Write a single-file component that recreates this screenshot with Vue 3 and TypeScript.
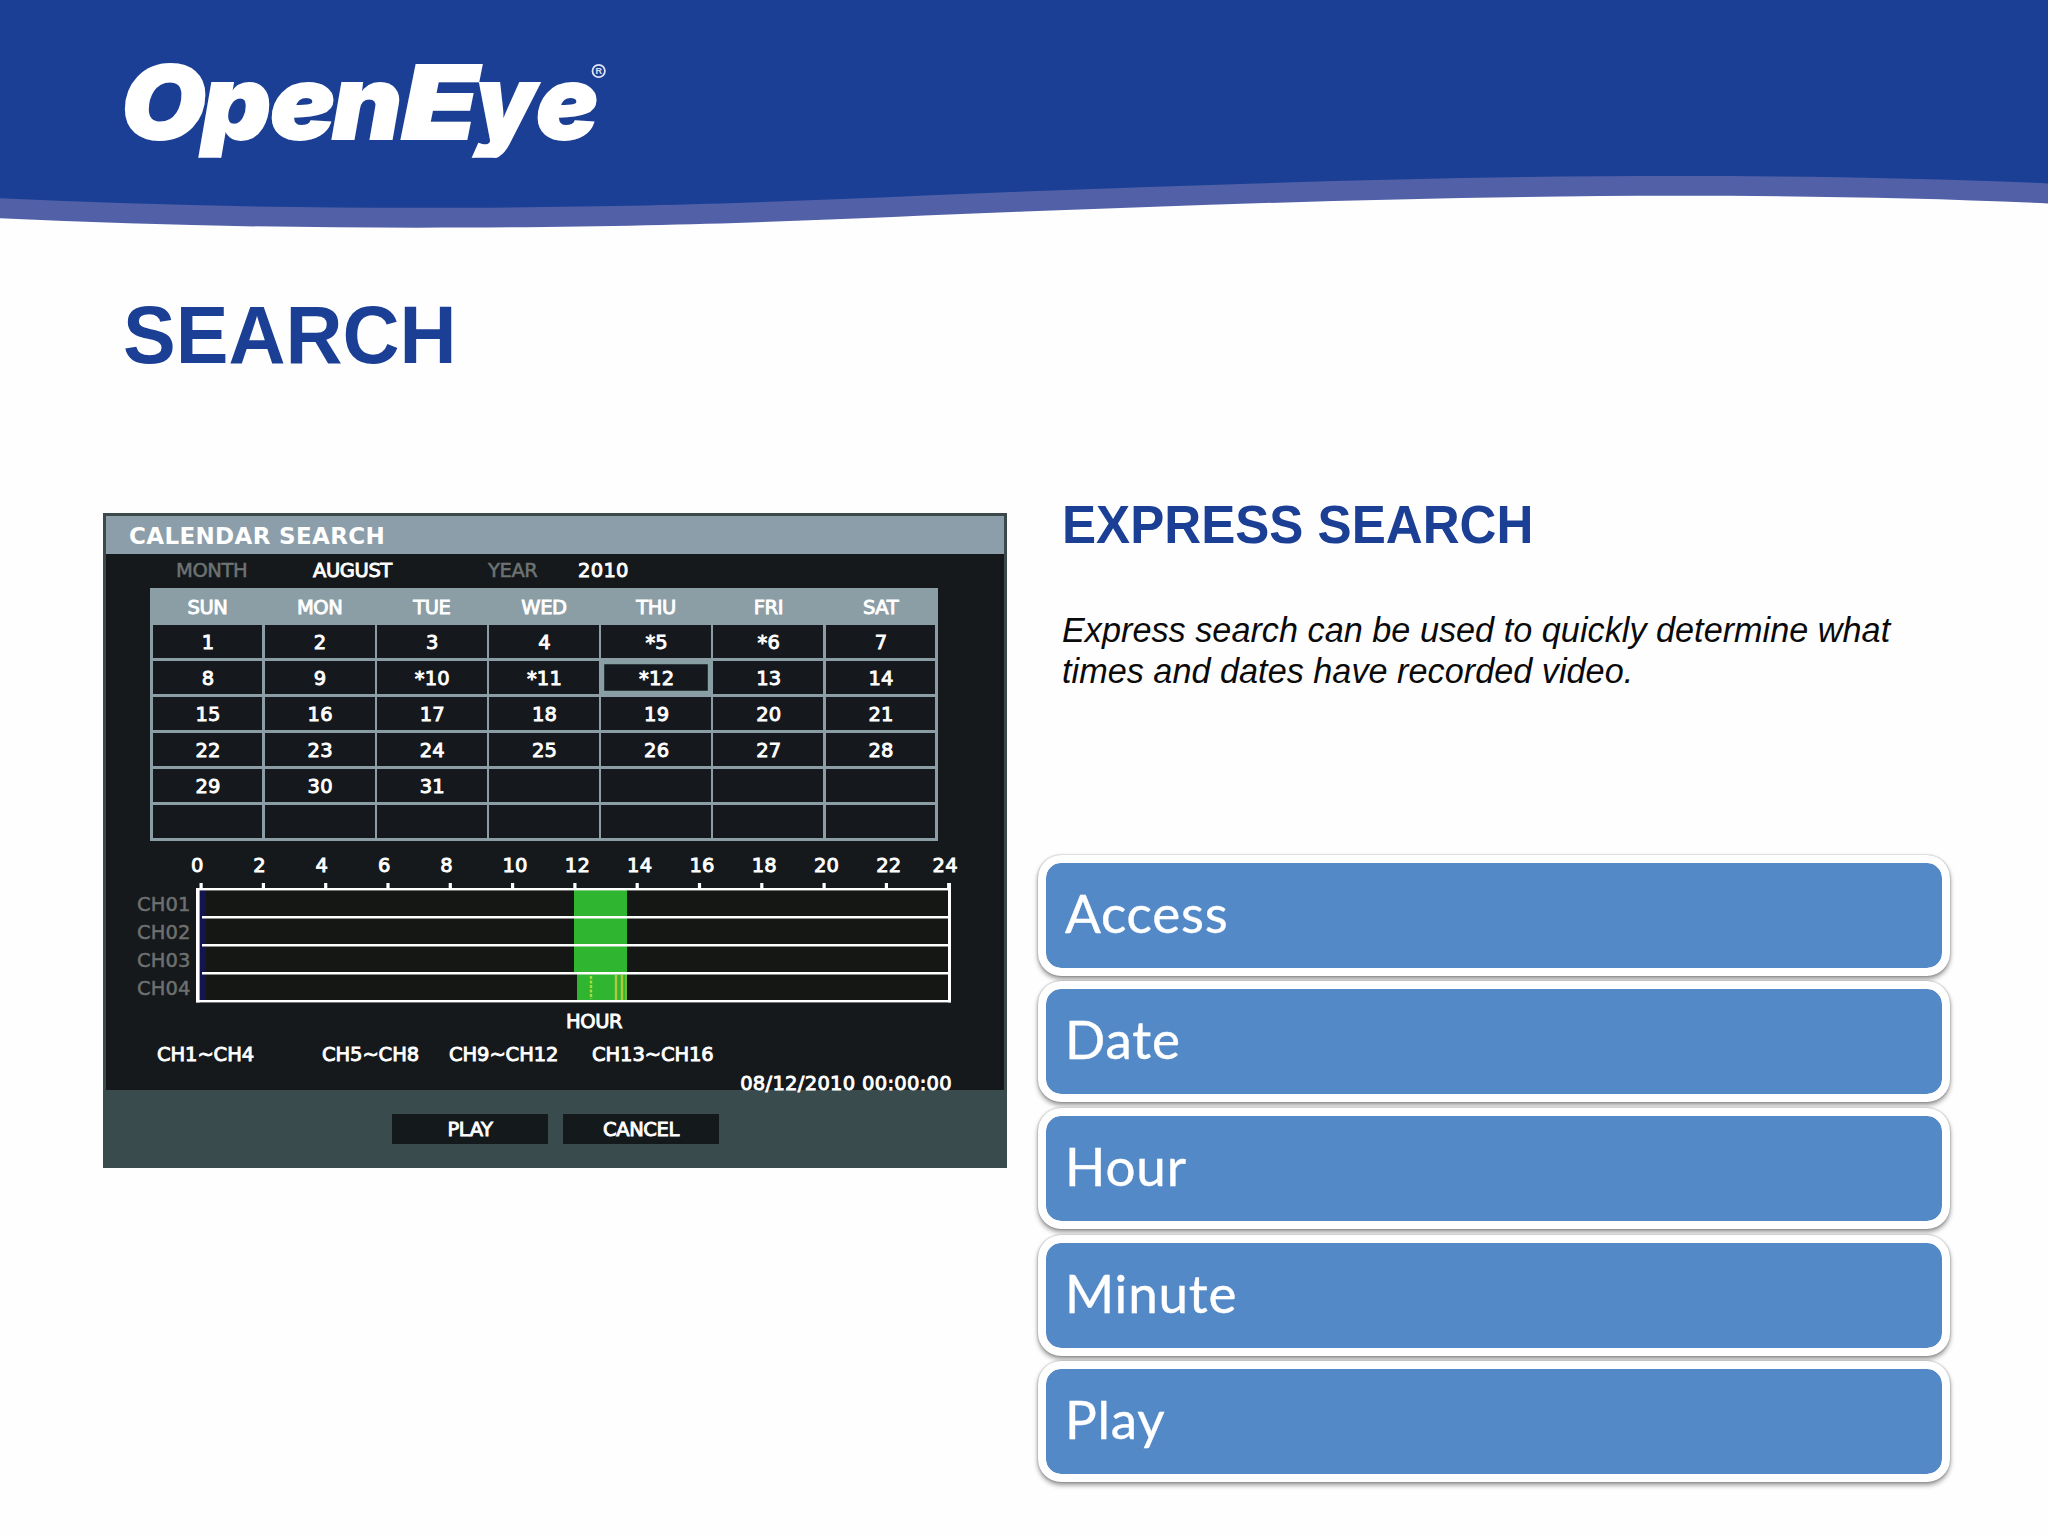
<script setup lang="ts">
interface Glyph {
  char: string
  x: number
  width: number
}

const logo: Glyph[] = [
  { char: 'O', x: 121, width: 85 },
  { char: 'p', x: 202, width: 69 },
  { char: 'e', x: 270, width: 65 },
  { char: 'n', x: 332, width: 70 },
  { char: 'E', x: 401.5, width: 77 },
  { char: 'y', x: 475, width: 61 },
  { char: 'e', x: 536, width: 62 },
]

const weekdays: string[] = ['SUN', 'MON', 'TUE', 'WED', 'THU', 'FRI', 'SAT']
const recorded = new Set<number>([5, 6, 10, 11, 12])
const selectedDay = 12
const days: number[] = Array.from({ length: 42 }, (_, i) => i + 1)

const hours: number[] = Array.from({ length: 13 }, (_, i) => i * 2)
const channels: string[] = ['CH01', 'CH02', 'CH03', 'CH04']
const groups: string[] = ['CH1~CH4', 'CH5~CH8', 'CH9~CH12', 'CH13~CH16']
const steps: string[] = ['Access', 'Date', 'Hour', 'Minute', 'Play']

function label(day: number): string {
  if (day > 31) return ''
  return recorded.has(day) ? `*${day}` : String(day)
}
</script>

<template>
  <div class="slide">
    <header class="banner">
      <svg viewBox="0 0 2048 240" width="2048" height="240">
        <path
          fill="#5260a8"
          d="M0 0V218.3C140 225 280 227.7 418 227.7C700 227.7 850 218 1024 211.5C1240 203.5 1450 195.8 1677 195.8C1800 195.8 1930 198 2048 203.5V0Z"
        />
        <path
          fill="#1b3f94"
          d="M0 0V198.3C140 205 280 207.8 418 207.8C700 207.8 850 198 1024 191.5C1240 183.5 1450 176 1677 176C1800 176 1930 178 2048 183.5V0Z"
        />
        <svg x="0" y="0" width="700" height="157.7" viewBox="0 0 700 157.7">
          <text class="logo" y="139.3">
            <tspan
              v-for="(g, i) in logo"
              :key="i"
              :x="g.x"
              :textLength="g.width"
              lengthAdjust="spacingAndGlyphs"
            >{{ g.char }}</tspan>
          </text>
        </svg>
        <circle cx="598.7" cy="71" r="6.2" fill="none" stroke="#dfe4f2" stroke-width="1.8" />
        <text class="reg" x="598.7" y="74.4" text-anchor="middle">R</text>
      </svg>
    </header>

    <h1>SEARCH</h1>

    <main>
      <section class="dvr">
        <div class="title">CALENDAR SEARCH</div>
        <div class="period">
          <span class="dim month">MONTH</span>
          <span class="august">AUGUST</span>
          <span class="dim year">YEAR</span>
          <span class="num">2010</span>
        </div>
        <div class="calendar">
          <div v-for="d in weekdays" :key="d" class="weekday">{{ d }}</div>
          <div v-for="d in days" :key="d" class="day" :class="{ selected: d === selectedDay }">{{ label(d) }}</div>
        </div>
        <div class="hours">
          <span v-for="h in hours" :key="h">{{ h }}</span>
        </div>
        <div class="timeline">
          <div class="channels">
            <span v-for="c in channels" :key="c">{{ c }}</span>
          </div>
          <svg viewBox="0 0 755 120" width="755" height="120">
            <rect x="1" y="6" width="753" height="112" fill="#151715" />
            <rect x="3" y="7" width="7" height="110" fill="#14144f" />
            <rect x="378" y="7" width="53" height="84" fill="#2fb530" />
            <rect x="381" y="91" width="50" height="26" fill="#2fb530" />
            <path d="M395 93V116" stroke="#a5dc3c" stroke-width="2.4" stroke-dasharray="3 1.5" />
            <path d="M420 92V117M426 92V117" stroke="#b4c83c" stroke-width="2.4" />
            <path d="M430 92V117" stroke="#7cb832" stroke-width="2" />
            <g fill="#fff">
              <rect
                v-for="(h, i) in hours"
                :key="h"
                :x="3.5 + i * 62.3"
                y="0"
                width="3.2"
                height="6"
              />
              <rect x="0" y="5" width="755" height="2.4" />
              <rect v-for="n in 3" :key="n" x="6" :y="5 + n * 28" width="748" height="2.5" />
              <rect x="0" y="117" width="755" height="2.4" />
              <rect x="0" y="5" width="3.6" height="114.4" />
              <rect x="752" y="0" width="3" height="119.4" />
            </g>
          </svg>
        </div>
        <div class="unit">HOUR</div>
        <div class="groups">
          <span v-for="g in groups" :key="g">{{ g }}</span>
        </div>
        <div class="stamp">08/12/2010 00:00:00</div>
        <div class="actions">
          <button type="button">PLAY</button>
          <button type="button">CANCEL</button>
        </div>
      </section>

      <section class="info">
        <h2>EXPRESS SEARCH</h2>
        <p>Express search can be used to quickly determine what<br />times and dates have recorded video.</p>
        <ul>
          <li v-for="s in steps" :key="s">{{ s }}</li>
        </ul>
      </section>
    </main>
  </div>
</template>

<style>
body {
  margin: 0;
  background: #fefefe;
}
</style>

<style scoped>
.slide {
  width: 2048px;
  height: 1536px;
  overflow: hidden;
  background: #fefefe;
  font-family: "Liberation Sans", Arial, sans-serif;
}
.banner {
  height: 240px;
}
.banner svg {
  display: block;
}
.logo {
  font: italic 900 102px Inter, sans-serif;
  fill: #fff;
  stroke: #fff;
  stroke-width: 1.8px;
}
.reg {
  font: bold 9px "Liberation Sans", sans-serif;
  fill: #dfe4f2;
}
h1 {
  margin: 51px 0 0 123px;
  font-size: 79px;
  line-height: 90px;
  color: #1b3f94;
  transform: scaleY(1.04);
  transform-origin: 0 80%;
}
main {
  display: flex;
  margin-top: 132px;
}
.dvr {
  box-sizing: border-box;
  width: 904px;
  height: 655px;
  margin-left: 103px;
  flex: none;
  border: 3px solid #3c494b;
  border-bottom: 0;
  background: #15191c;
  color: #fff;
  font: 19.5px/24px "DejaVu Sans", sans-serif;
  letter-spacing: -0.4px;
  -webkit-text-stroke: 0.9px currentColor;
  white-space: nowrap;
}
.title {
  height: 38px;
  padding-left: 23px;
  background: #8c9eaa;
  font-size: 23px;
  font-weight: bold;
  line-height: 40px;
  letter-spacing: 0.35px;
  -webkit-text-stroke-width: 0;
}
.period {
  display: flex;
  height: 34px;
  padding-left: 70px;
  line-height: 33px;
}
.dim {
  color: #6d7473;
  -webkit-text-stroke-width: 0.5px;
}
.num {
  letter-spacing: 0.3px;
}
.month {
  width: 137px;
}
.august {
  width: 175px;
}
.year {
  width: 90px;
}
.calendar {
  box-sizing: border-box;
  width: 788px;
  height: 253px;
  margin-left: 44px;
  padding: 0 2.6px 3px;
  display: grid;
  grid-template-columns: repeat(7, 1fr);
  grid-template-rows: 34.4px repeat(6, 33.4px);
  gap: 2.6px 2.4px;
  background: #8b9da5;
}
.weekday,
.day {
  display: flex;
  align-items: center;
  justify-content: center;
}
.weekday {
  padding-top: 5px;
}
.day {
  padding: 2px 0 0 1px;
  background: #15191d;
  letter-spacing: 0.2px;
}
.selected {
  box-shadow: inset 0 0 0 3.2px #86a0a4;
}
.hours {
  display: flex;
  height: 42px;
  padding-left: 85px;
  line-height: 49px;
  letter-spacing: 0.2px;
}
.hours span {
  width: 62.3px;
  flex: none;
}
.hours span:last-child {
  margin-left: -6px;
}
.timeline {
  display: flex;
  height: 120px;
}
.channels {
  width: 90px;
  padding-top: 8px;
  display: flex;
  flex-direction: column;
  text-indent: 31px;
  line-height: 28px;
  letter-spacing: 0.1px;
  color: #6d706f;
  -webkit-text-stroke-width: 0.5px;
}
.timeline svg {
  flex: none;
}
.unit {
  height: 33px;
  padding-left: 460px;
  line-height: 37px;
}
.groups {
  display: flex;
  height: 33px;
  padding-left: 51px;
  line-height: 37px;
  letter-spacing: -0.1px;
}
.groups span:nth-child(1) {
  width: 165px;
}
.groups span:nth-child(2) {
  width: 127px;
}
.groups span:nth-child(3) {
  width: 143px;
}
.stamp {
  position: relative;
  height: 21px;
  padding-right: 52px;
  text-align: right;
  line-height: 29px;
  letter-spacing: 0.3px;
  z-index: 1;
}
.actions {
  display: flex;
  gap: 15px;
  height: 54px;
  margin: 0 -3px;
  padding: 24px 0 0 289px;
  background: #3a4b4e;
}
button {
  width: 156px;
  height: 30px;
  padding: 1px 0 0;
  border: 0;
  background: #14191c;
  color: inherit;
  font: inherit;
  letter-spacing: inherit;
  -webkit-text-stroke: inherit;
}
.info {
  margin-left: 31px;
}
h2 {
  margin: -17px 0 0 24px;
  font-size: 51.1px;
  line-height: 60px;
  color: #1b3f94;
  transform: scaleY(1.04);
  transform-origin: 0 80%;
}
p {
  margin: 54px 0 0 24px;
  font-size: 34.2px;
  font-style: italic;
  line-height: 40.9px;
  letter-spacing: 0.03px;
  white-space: nowrap;
  color: #0a0a0a;
}
ul {
  width: 912px;
  margin: 163px 0 0;
  padding: 0;
  display: flex;
  flex-direction: column;
  gap: 5.6px;
  list-style: none;
}
li {
  box-sizing: border-box;
  height: 121px;
  padding-left: 19px;
  border: 8px solid #fff;
  border-radius: 23px;
  background: #5489c8;
  background-clip: padding-box;
  box-shadow: 0 3px 5px rgba(0, 0, 0, 0.42), 0 0 2px rgba(0, 0, 0, 0.35);
  color: #fff;
  font: 53px/100px Lato, Carlito, sans-serif;
  letter-spacing: 0.8px;
  -webkit-text-stroke: 0.4px #fff;
}
</style>
